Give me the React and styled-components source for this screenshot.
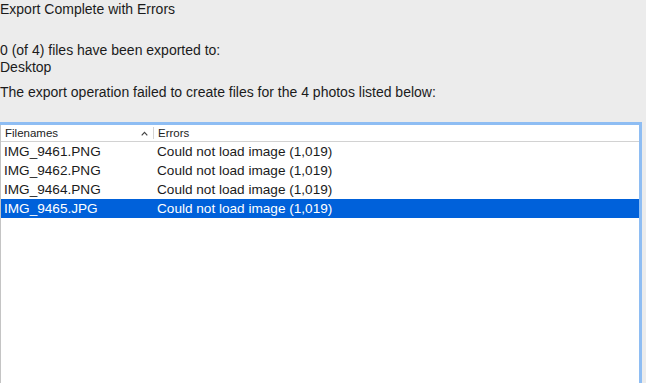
import React from "react";
import styled, { createGlobalStyle } from "styled-components";

const Global = createGlobalStyle`
  html, body {
    margin: 0;
    padding: 0;
    background: #ececec;
    overflow: hidden;
  }
  body {
    font-family: "Liberation Sans", Arial, Helvetica, sans-serif;
    font-size: 14px;
    color: #1b1b1b;
  }
`;

const Page = styled.div`
  width: 646px;
  height: 383px;
  display: flex;
  flex-direction: column;
  overflow: hidden;
  background: #ececec;
`;

const Title = styled.div`
  padding: 1px 0 0 0;
  line-height: 17px;
  margin-bottom: 24px;
`;

const Line = styled.div`
  line-height: 17px;
  margin-bottom: ${(p) => p.$gap || 0}px;
`;

const TableFrame = styled.div`
  width: 639px;
  height: 300px;
  box-sizing: border-box;
  background: #fff;
  border-left: 1px solid #c4c4c4;
  box-shadow: 0 0 0 3px #8ebdf3;
  flex-shrink: 0;
`;

const Header = styled.div`
  display: grid;
  grid-template-columns: 153px 1fr;
  height: 16px;
  border-bottom: 1px solid #d2d2d2;
  font-size: 11.5px;
  color: #222;
  align-items: center;
`;

const HeaderCell = styled.div`
  display: flex;
  align-items: center;
  justify-content: space-between;
  height: 12px;
  padding-left: ${(p) => p.$pad}px;
  padding-right: 5px;
  border-right: ${(p) => (p.$divider ? "1px solid #d4d4d4" : "none")};
  box-sizing: border-box;
  line-height: 12px;
`;

const Row = styled.div`
  display: grid;
  grid-template-columns: 156px 1fr;
  height: 19px;
  line-height: 20px;
  font-size: 13.6px;
  background: ${(p) => (p.$selected ? "#0061da" : "transparent")};
  color: ${(p) => (p.$selected ? "#fff" : "#1b1b1b")};
`;

const Cell = styled.div`
  padding-left: ${(p) => p.$pad}px;
  white-space: nowrap;
`;

const Chevron = () => (
  <svg width="7" height="5" viewBox="0 0 7 5">
    <path d="M0.7 4.3 L3.5 1.3 L6.3 4.3" fill="none" stroke="#444" strokeWidth="1.2" />
  </svg>
);

const rows = [
  ["IMG_9461.PNG", "Could not load image (1,019)"],
  ["IMG_9462.PNG", "Could not load image (1,019)"],
  ["IMG_9464.PNG", "Could not load image (1,019)"],
  ["IMG_9465.JPG", "Could not load image (1,019)", true],
];

export default function App() {
  return (
    <Page>
      <Global />
      <Title>Export Complete with Errors</Title>
      <Line>0 (of 4) files have been exported to:</Line>
      <Line $gap={8}>Desktop</Line>
      <Line $gap={24}>The export operation failed to create files for the 4 photos listed below:</Line>
      <TableFrame>
        <Header>
          <HeaderCell $pad={4} $divider>
            <span>Filenames</span>
            <Chevron />
          </HeaderCell>
          <HeaderCell $pad={4}>
            <span>Errors</span>
          </HeaderCell>
        </Header>
        {rows.map(([f, e, sel]) => (
          <Row key={f} $selected={sel}>
            <Cell $pad={3}>{f}</Cell>
            <Cell $pad={0}>{e}</Cell>
          </Row>
        ))}
      </TableFrame>
    </Page>
  );
}
